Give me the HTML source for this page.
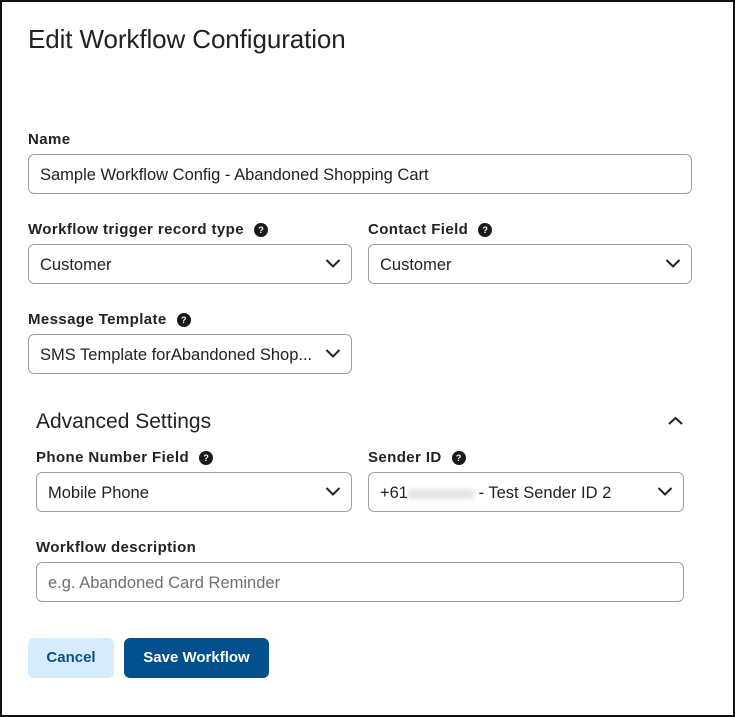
<!DOCTYPE html>
<html><head><meta charset="utf-8"><style>
*{box-sizing:border-box;margin:0;padding:0}
body{width:735px;height:717px;background:#fff;font-family:"Liberation Sans",sans-serif;color:#1f2124;position:relative;overflow:hidden}
.frame{position:absolute;left:0;top:0;width:735px;height:717px;border:2px solid #111}
.a{position:absolute}
h1{position:absolute;left:28px;top:24px;font-size:26px;font-weight:500;letter-spacing:-0.1px;color:#222}
.lbl{position:absolute;font-size:15px;font-weight:600;color:#222;line-height:18px;letter-spacing:0.4px}
.q{display:inline-block;width:14px;height:14px;border-radius:50%;background:#1a1a1a;color:#fff;font-size:9px;font-weight:700;text-align:center;line-height:14px;margin-left:10px;vertical-align:1px;letter-spacing:0}
.box{position:absolute;height:40px;border:1px solid #9aa0a6;border-radius:6px;font-size:16.5px;line-height:40px;padding-left:11px;color:#222}
.chev{position:absolute;right:10px;top:13px}
.btn{position:absolute;height:40px;border-radius:6px;font-size:15px;font-weight:700;text-align:center;line-height:40px}
</style></head><body>
<div class="frame"></div>
<h1>Edit Workflow Configuration</h1>
<div class="lbl" style="left:28px;top:131px">Name</div>
<div class="box" style="left:28px;top:154px;width:664px">Sample Workflow Config - Abandoned Shopping Cart</div>

<div class="lbl" style="left:28px;top:221px">Workflow trigger record type<span class="q">?</span></div>
<div class="box" style="left:28px;top:244px;width:324px">Customer<svg class="chev" width="16" height="11" viewBox="0 0 16 11"><path d="M1.5 2l6.5 6.5 6.5-6.5" fill="none" stroke="#222" stroke-width="2"/></svg></div>
<div class="lbl" style="left:368px;top:221px">Contact Field<span class="q">?</span></div>
<div class="box" style="left:368px;top:244px;width:324px">Customer<svg class="chev" width="16" height="11" viewBox="0 0 16 11"><path d="M1.5 2l6.5 6.5 6.5-6.5" fill="none" stroke="#222" stroke-width="2"/></svg></div>

<div class="lbl" style="left:28px;top:311px">Message Template<span class="q">?</span></div>
<div class="box" style="left:28px;top:334px;width:324px">SMS Template forAbandoned Shop...<svg class="chev" width="16" height="11" viewBox="0 0 16 11"><path d="M1.5 2l6.5 6.5 6.5-6.5" fill="none" stroke="#222" stroke-width="2"/></svg></div>

<div class="a" style="left:36px;top:410px;font-size:21px;font-weight:500;color:#222">Advanced Settings</div>
<svg class="a" style="left:667px;top:416px" width="17" height="10" viewBox="0 0 17 10"><path d="M2 8l6.5-6 6.5 6" fill="none" stroke="#222" stroke-width="2"/></svg>

<div class="lbl" style="left:36px;top:449px">Phone Number Field<span class="q">?</span></div>
<div class="box" style="left:36px;top:472px;width:316px">Mobile Phone<svg class="chev" width="16" height="11" viewBox="0 0 16 11"><path d="M1.5 2l6.5 6.5 6.5-6.5" fill="none" stroke="#222" stroke-width="2"/></svg></div>
<div class="lbl" style="left:368px;top:449px">Sender ID<span class="q">?</span></div>
<div class="box" style="left:368px;top:472px;width:316px">+61<span style="display:inline-block;width:66px;height:10px;background:#e3e5e8;vertical-align:-1px;filter:blur(2px)"></span> - Test Sender ID 2<svg class="chev" width="16" height="11" viewBox="0 0 16 11"><path d="M1.5 2l6.5 6.5 6.5-6.5" fill="none" stroke="#222" stroke-width="2"/></svg></div>

<div class="lbl" style="left:36px;top:539px">Workflow description</div>
<div class="box" style="left:36px;top:562px;width:648px;color:#6b7075">e.g. Abandoned Card Reminder</div>

<div class="btn" style="left:28px;top:638px;width:86px;background:#d6ecfb;color:#0b4f8a">Cancel</div>
<div class="btn" style="left:124px;top:638px;width:145px;background:#04508c;color:#fff">Save Workflow</div>
</body></html>
